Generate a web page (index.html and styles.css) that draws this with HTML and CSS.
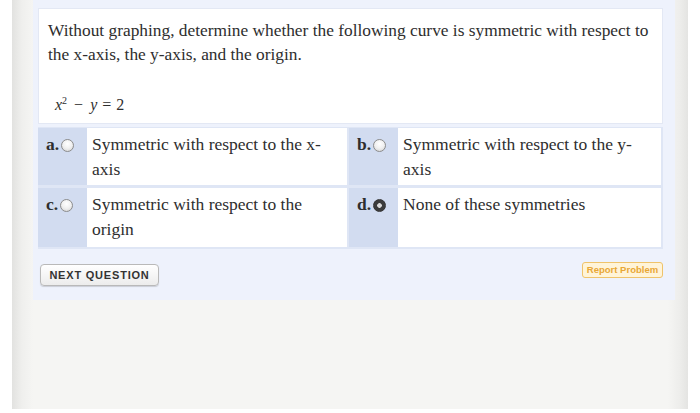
FILE: index.html
```html
<!DOCTYPE html>
<html>
<head>
<meta charset="utf-8">
<link rel="stylesheet" href="styles.css">
</head>
<body>
<div class="frame">
  <div class="panel">
    <div class="question">
      <p class="prompt">Without graphing, determine whether the following curve is symmetric with respect to the x-axis, the y-axis, and the origin.</p>
      <p class="equation"><i>x</i><sup>2</sup> <span class="op">−</span> <i>y</i> = 2</p>
    </div>
    <div class="options">
      <div class="label">a.<span class="radio"></span></div>
      <div class="text left">Symmetric with respect to the x-axis</div>
      <div class="label">b.<span class="radio"></span></div>
      <div class="text">Symmetric with respect to the y-axis</div>
      <div class="label">c.<span class="radio"></span></div>
      <div class="text left">Symmetric with respect to the origin</div>
      <div class="label">d.<span class="radio checked"></span></div>
      <div class="text">None of these symmetries</div>
    </div>
    <div class="actions">
      <button class="next">NEXT QUESTION</button>
      <button class="report">Report Problem</button>
    </div>
  </div>
</div>
</body>
</html>
```

FILE: styles.css
```css
html, body {
  margin: 0;
  padding: 0;
  background: #ffffff;
  height: 100%;
}
.frame {
  margin: 0 12px;
  height: 409px;
  background: linear-gradient(to right, #e2e2e0 0, #efefed 10px, #f5f5f3 21px, #f5f5f3 calc(100% - 20px), #ededeb calc(100% - 8px), #e4e4e2 100%);
  padding: 0 13px 0 21px;
}
.panel {
  background: #eef2fc;
  height: 300px;
  padding: 8px 12px 0 5px;
  box-sizing: border-box;
}
.question {
  background: #ffffff;
  border: 1px solid #e3e8f4;
  height: 116px;
  box-sizing: border-box;
  padding: 10px 10px 0 9px;
  font-family: "Liberation Serif", "Times New Roman", serif;
  color: #2e2e2e;
}
.prompt {
  margin: 0;
  font-size: 17.35px;
  line-height: 24px;
}
.equation {
  margin: 28px 0 0 7px;
  font-size: 16px;
  line-height: 20px;
  word-spacing: 1px;
}
.equation .op {
  margin: 0 2px;
}
.equation sup {
  font-size: 10px;
  line-height: 0;
}
.options {
  margin-top: 3px;
  background: #dfe6f5;
  padding: 1px 2px 2px 0;
  display: grid;
  grid-template-columns: 49px 262px 49px 1fr;
  grid-template-rows: 57px 59px;
  row-gap: 3px;
  font-family: "Liberation Serif", "Times New Roman", serif;
  font-size: 17.5px;
  line-height: 25px;
  color: #2e2e2e;
}
.options .label {
  background: #d2dcf0;
  font-weight: bold;
  padding: 4px 0 0 8px;
  display: flex;
  align-items: flex-start;
}
.options .text {
  background: #ffffff;
  padding: 4px 8px 0 5px;
}
.options .text.left {
  margin-right: 2px;
}
.radio {
  display: inline-block;
  width: 11px;
  height: 11px;
  margin: 7px 0 0 2px;
  border-radius: 50%;
  border: 1px solid #8c8c8c;
  background: radial-gradient(circle at 50% 35%, #ffffff 0, #f0f0f0 50%, #cfcfcf 100%);
}
.radio.checked {
  border: 1px solid #333;
  background: radial-gradient(circle, #d9d9d9 0, #d9d9d9 2px, #3c3c3c 2.6px, #3c3c3c 100%);
}
.actions {
  display: flex;
  justify-content: space-between;
  align-items: flex-start;
  margin-top: 14px;
  padding-left: 2px;
}
.next {
  width: 119px;
  height: 22px;
  border: 1px solid #b9b9b9;
  border-radius: 4px;
  background: linear-gradient(#ffffff, #ececec);
  box-shadow: 0 1px 1px rgba(0,0,0,0.15);
  font-family: "Liberation Sans", Arial, sans-serif;
  font-weight: bold;
  font-size: 11px;
  letter-spacing: 0.8px;
  color: #333333;
  padding: 0;
  margin-top: 1px;
}
.report {
  width: 81px;
  height: 16px;
  border: 1px solid #efc36a;
  border-radius: 3px;
  background: #fff4d8;
  font-family: "Liberation Sans", Arial, sans-serif;
  font-size: 9.5px;
  font-weight: bold;
  color: #e8a735;
  padding: 0;
  margin-top: -1px;
  line-height: 14px;
}
```
